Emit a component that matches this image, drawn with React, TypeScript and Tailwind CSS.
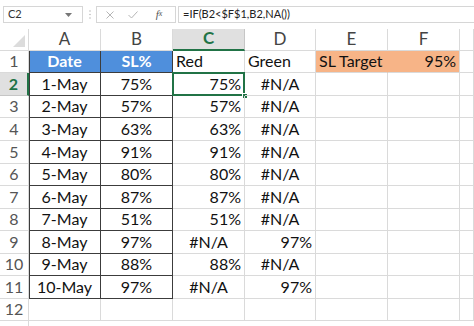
import React from "react";

const cols = ["A", "B", "C", "D", "E", "F", ""];
const rowsH = [22, 23, 22, 23, 23, 22, 23, 22, 23, 22, 23, 22];

type Cell = { t?: string; align?: "l" | "c" | "r" };
const data: Cell[][] = [
  [{ t: "Date", align: "c" }, { t: "SL%", align: "c" }, { t: "Red", align: "l" }, { t: "Green", align: "l" }, { t: "SL Target", align: "l" }, { t: "95%", align: "r" }],
  [{ t: "1-May", align: "c" }, { t: "75%", align: "c" }, { t: "75%", align: "r" }, { t: "#N/A", align: "c" }],
  [{ t: "2-May", align: "c" }, { t: "57%", align: "c" }, { t: "57%", align: "r" }, { t: "#N/A", align: "c" }],
  [{ t: "3-May", align: "c" }, { t: "63%", align: "c" }, { t: "63%", align: "r" }, { t: "#N/A", align: "c" }],
  [{ t: "4-May", align: "c" }, { t: "91%", align: "c" }, { t: "91%", align: "r" }, { t: "#N/A", align: "c" }],
  [{ t: "5-May", align: "c" }, { t: "80%", align: "c" }, { t: "80%", align: "r" }, { t: "#N/A", align: "c" }],
  [{ t: "6-May", align: "c" }, { t: "87%", align: "c" }, { t: "87%", align: "r" }, { t: "#N/A", align: "c" }],
  [{ t: "7-May", align: "c" }, { t: "51%", align: "c" }, { t: "51%", align: "r" }, { t: "#N/A", align: "c" }],
  [{ t: "8-May", align: "c" }, { t: "97%", align: "c" }, { t: "#N/A", align: "c" }, { t: "97%", align: "r" }],
  [{ t: "9-May", align: "c" }, { t: "88%", align: "c" }, { t: "88%", align: "r" }, { t: "#N/A", align: "c" }],
  [{ t: "10-May", align: "c" }, { t: "97%", align: "c" }, { t: "#N/A", align: "c" }, { t: "97%", align: "r" }],
  [],
];

function cellClass(r: number, c: number): string {
  const base = "relative flex items-end pb-[1px] px-[3px] border-r border-b text-[16px] leading-[20px] text-[#111] whitespace-nowrap";
  const inTable = r <= 10 && c <= 1;
  let cls = base;
  if (inTable) {
    cls += " border-[#3c3c3c]";
    if (c === 0) cls += " shadow-[inset_1px_0_0_#3c3c3c]";
  } else {
    cls += " border-[#dadada]";
  }
  if (r === 0 && c <= 1) cls += " bg-[#4f8fdc] text-white font-bold";
  if (r === 0 && c === 4) cls += " bg-[#f7b487] border-r-[#f7b487] z-10";
  if (r === 0 && c === 5) cls += " bg-[#f7b487]";
  const a = data[r]?.[c]?.align;
  if (a === "c") cls += " justify-center";
  else if (a === "r") cls += " justify-end";
  else cls += " justify-start";
  return cls;
}

export default function App() {
  return (
    <div
      className="w-[474px] h-[326px] overflow-hidden bg-white flex flex-col"
      style={{ fontFamily: "Lato, 'Open Sans', sans-serif" }}
    >
      {/* Formula bar */}
      <div className="h-[29px] flex items-start pt-[6px] pl-[3px] shrink-0">
        <div className="w-[80px] h-[17px] border border-[#d6d6d6] flex items-center pl-[4px] pr-[10px] justify-between text-[11px] text-[#333]">
          <span>C2</span>
          <svg width="7" height="4" viewBox="0 0 7 4"><path d="M0 0h7L3.5 4z" fill="#777" /></svg>
        </div>
        <div className="w-[13px] h-[17px] flex items-center justify-center">
          <svg width="2" height="9" viewBox="0 0 2 9"><circle cx="1" cy="1" r="0.8" fill="#bbb" /><circle cx="1" cy="4.5" r="0.8" fill="#bbb" /><circle cx="1" cy="8" r="0.8" fill="#bbb" /></svg>
        </div>
        <div className="w-[80px] h-[17px] border border-[#d6d6d6] flex items-center">
          <div className="w-[26px] flex justify-center">
            <svg width="8" height="8" viewBox="0 0 8 8"><path d="M0.5 0.5L7.5 7.5M7.5 0.5L0.5 7.5" stroke="#b5b5b5" strokeWidth="1" /></svg>
          </div>
          <div className="w-[20px] flex justify-center">
            <svg width="10" height="8" viewBox="0 0 10 8"><path d="M0.5 4L3.5 7L9.5 0.5" stroke="#b5b5b5" strokeWidth="1" fill="none" /></svg>
          </div>
          <div className="flex-1 flex justify-center text-[11px] italic text-[#555]" style={{ fontFamily: "'Liberation Serif', serif" }}>
            f<span className="text-[8px] relative top-[2px]">x</span>
          </div>
        </div>
        <div className="flex-1 h-[17px] ml-[2px] border border-r-0 border-[#d6d6d6] flex items-center pl-[4px] text-[11px] text-[#222]">
          =IF(B2&lt;$F$1,B2,NA())
        </div>
      </div>

      {/* Sheet */}
      <div className="grid grid-cols-[29px_72px_72px_72px_71px_72px_72px_1fr] grid-rows-[22px_22px_23px_22px_23px_23px_22px_23px_22px_23px_22px_23px_22px_22px]">
        <div className="relative border-r border-b border-[#dadada] bg-white">
          <svg className="absolute right-[3px] bottom-[3px]" width="12" height="12" viewBox="0 0 12 12"><path d="M12 0V12H0z" fill="#dcdcdc" /></svg>
        </div>
        {cols.map((c, i) => (
          <div
            key={c + i}
            className={
              i === 2
                ? "flex items-end justify-center pb-[1px] bg-[#e0e0e0] border-r border-[#c6c6c6] border-b-2 border-b-[#217346] text-[17px] leading-[20px] font-bold text-[#217346]"
                : "flex items-end justify-center pb-[1px] bg-white border-r border-b border-[#dadada] text-[17px] leading-[20px] text-[#444]"
            }
          >
            {c}
          </div>
        ))}
        {rowsH.map((_, r) => (
          <React.Fragment key={r}>
            <div
              className={
                r === 1
                  ? "flex items-end justify-center pb-[1px] bg-[#e0e0e0] border-b border-[#c6c6c6] border-r-2 border-r-[#217346] text-[16px] leading-[20px] font-bold text-[#217346]"
                  : "flex items-end justify-center pb-[1px] bg-white border-r border-b border-[#dadada] text-[16px] leading-[20px] text-[#555]"
              }
            >
              {r + 1}
            </div>
            {[0, 1, 2, 3, 4, 5, 6].map((c) => (
              <div key={c} className={cellClass(r, c)}>
                {data[r]?.[c]?.t}
                {r === 1 && c === 2 && (
                  <>
                    <div className="absolute -left-[1px] -top-[1px] right-[-1px] bottom-[-1px] border-2 border-[#217346] pointer-events-none" />
                    <div className="absolute right-[-4px] bottom-[-4px] w-[6px] h-[6px] bg-[#217346] border border-white" />
                  </>
                )}
              </div>
            ))}
          </React.Fragment>
        ))}
        <div className="border-r border-[#dadada]" />
      </div>
    </div>
  );
}
